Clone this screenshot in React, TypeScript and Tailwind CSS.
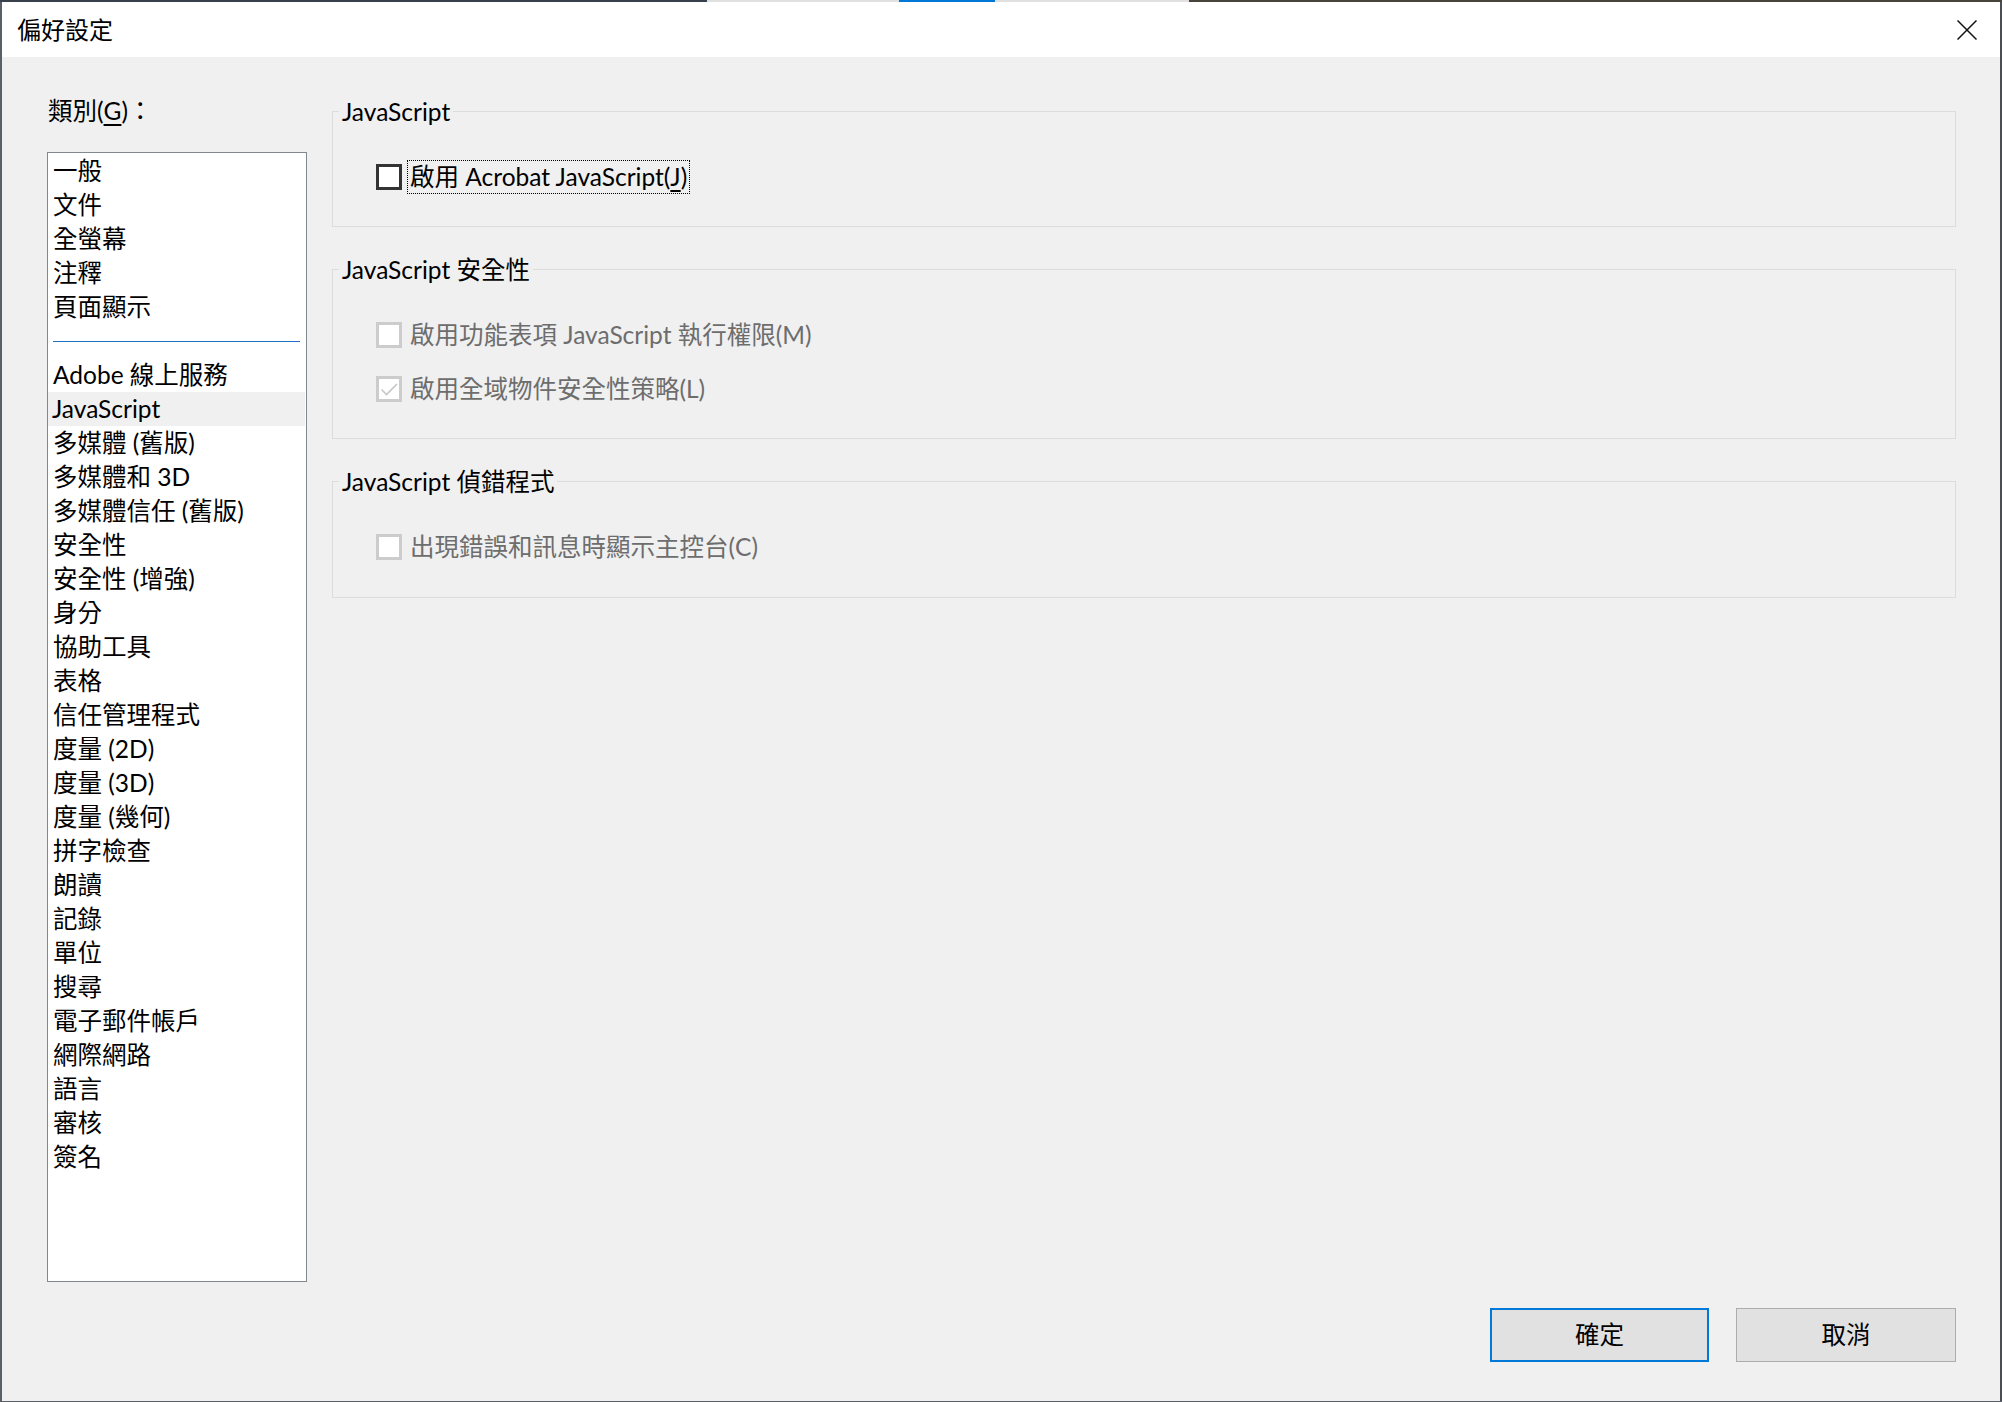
import React from "react";

const topItems = ["一般", "文件", "全螢幕", "注釋", "頁面顯示"];
const bottomItems = [
  "Adobe 線上服務",
  "JavaScript",
  "多媒體 (舊版)",
  "多媒體和 3D",
  "多媒體信任 (舊版)",
  "安全性",
  "安全性 (增強)",
  "身分",
  "協助工具",
  "表格",
  "信任管理程式",
  "度量 (2D)",
  "度量 (3D)",
  "度量 (幾何)",
  "拼字檢查",
  "朗讀",
  "記錄",
  "單位",
  "搜尋",
  "電子郵件帳戶",
  "網際網路",
  "語言",
  "審核",
  "簽名",
];

function Checkbox({ disabled, checked }: { disabled?: boolean; checked?: boolean }) {
  return (
    <div
      className={
        disabled
          ? "w-[26px] h-[26px] shrink-0 border-[3px] border-[#cccccc] bg-white flex items-center justify-center"
          : "w-[26px] h-[26px] shrink-0 border-[3px] border-[#333333] bg-white flex items-center justify-center"
      }
    >
      {checked && (
        <svg width="20" height="20" viewBox="0 0 20 20">
          <polyline points="2.5,10.5 7.5,15.5 18,5" fill="none" stroke="#c6c6c6" strokeWidth="1.6" />
        </svg>
      )}
    </div>
  );
}

function Group({
  title,
  heightClass,
  children,
  className,
}: {
  title: string;
  heightClass: string;
  children: React.ReactNode;
  className?: string;
}) {
  return (
    <div className={`border border-[#dcdcdc] ${heightClass} ${className ?? ""}`}>
      <div className="-mt-[17px] ml-[6px] px-[3px] w-fit bg-[#f0f0f0] h-[34px] leading-[34px] text-black whitespace-nowrap">
        {title}
      </div>
      {children}
    </div>
  );
}

export default function App() {
  return (
    <div className="w-[2002px] h-[1402px] bg-[#3a424c] flex flex-col overflow-hidden font-['Lato','Noto_Sans_CJK_TC',sans-serif] font-normal text-[24.5px]">
      {/* background strip above window */}
      <div className="h-[2px] flex shrink-0">
        <div className="w-[707px] bg-[#37404b]" />
        <div className="w-[192px] bg-[#e0e0e0]" />
        <div className="w-[96px] bg-[#0078d7]" />
        <div className="w-[194px] bg-[#e0e0e0]" />
        <div className="flex-1 bg-[#47433d]" />
      </div>
      <div className="flex h-[1399px] shrink-0">
        <div className="w-[2px] bg-[#5b6068]" />
        <div className="w-[1998px] flex flex-col">
          {/* title bar */}
          <div className="h-[55px] bg-white flex items-center justify-between shrink-0">
            <div className="pl-[15px] text-[24px] leading-[34px] text-black">偏好設定</div>
            <div className="mr-[23px] w-[20px] h-[20px]">
              <svg width="20" height="20" viewBox="0 0 20 20">
                <line x1="0.5" y1="0.5" x2="19.5" y2="19.5" stroke="#111" strokeWidth="1.5" />
                <line x1="19.5" y1="0.5" x2="0.5" y2="19.5" stroke="#111" strokeWidth="1.5" />
              </svg>
            </div>
          </div>
          {/* body */}
          <div className="flex-1 bg-[#f0f0f0] pt-[37px] pl-[45px] pr-[44px] flex flex-col">
            <div className="flex gap-[25px]">
              {/* left column */}
              <div className="w-[260px] shrink-0 flex flex-col">
                <div className="pl-[1px] h-[34px] leading-[34px] text-black">
                  類別(<span className="underline underline-offset-[4px]">G</span>)：
                </div>
                <div className="mt-[24px] h-[1130px] border border-[#828790] bg-white pt-[1px] pr-[1px]">
                  {topItems.map((t) => (
                    <div key={t} className="h-[34px] leading-[34px] pl-[5px] text-black whitespace-nowrap">
                      {t}
                    </div>
                  ))}
                  <div className="h-[34px] flex items-center px-[5px]">
                    <div className="h-[1px] w-full bg-[#1f72c6]" />
                  </div>
                  {bottomItems.map((t) => (
                    <div
                      key={t}
                      className={
                        t === "JavaScript"
                          ? "h-[34px] leading-[34px] pl-[4px] text-black whitespace-nowrap bg-[#f0f0f0]"
                          : "h-[34px] leading-[34px] pl-[5px] text-black whitespace-nowrap"
                      }
                    >
                      {t}
                    </div>
                  ))}
                </div>
              </div>
              {/* right column */}
              <div className="flex-1 pt-[17px] flex flex-col">
                <Group title="JavaScript" heightClass="h-[116px]">
                  <div className="mt-[31px] h-[34px] flex items-center pl-[43px]">
                    <Checkbox />
                    <div className="ml-[5px] h-[34px] leading-[32px] px-[2px] border border-dotted border-black text-black whitespace-nowrap">
                      啟用 Acrobat JavaScript(<span className="underline underline-offset-[4px]">J</span>)
                    </div>
                  </div>
                </Group>
                <Group title="JavaScript 安全性" heightClass="h-[170px]" className="mt-[42px]">
                  <div className="mt-[31px] h-[34px] flex items-center pl-[43px]">
                    <Checkbox disabled />
                    <div className="ml-[5px] h-[34px] leading-[32px] px-[2px] border border-transparent text-[#6d6d6d] whitespace-nowrap">
                      啟用功能表項 JavaScript 執行權限(M)
                    </div>
                  </div>
                  <div className="mt-[20px] h-[34px] flex items-center pl-[43px]">
                    <Checkbox disabled checked />
                    <div className="ml-[5px] h-[34px] leading-[32px] px-[2px] border border-transparent text-[#6d6d6d] whitespace-nowrap">
                      啟用全域物件安全性策略(L)
                    </div>
                  </div>
                </Group>
                <Group title="JavaScript 偵錯程式" heightClass="h-[117px]" className="mt-[42px]">
                  <div className="mt-[31px] h-[34px] flex items-center pl-[43px]">
                    <Checkbox disabled />
                    <div className="ml-[5px] h-[34px] leading-[32px] px-[2px] border border-transparent text-[#6d6d6d] whitespace-nowrap">
                      出現錯誤和訊息時顯示主控台(C)
                    </div>
                  </div>
                </Group>
              </div>
            </div>
            {/* buttons */}
            <div className="mt-[26px] flex justify-end gap-[27px]">
              <div className="w-[219px] h-[54px] border-2 border-[#0078d7] bg-[#e1e1e1] flex items-center justify-center text-black">
                確定
              </div>
              <div className="w-[220px] h-[54px] border border-[#adadad] bg-[#e1e1e1] flex items-center justify-center text-black">
                取消
              </div>
            </div>
          </div>
        </div>
        <div className="w-[2px] bg-[#4a4d52]" />
      </div>
      <div className="h-[1px] bg-[#5b6068]" />
    </div>
  );
}
